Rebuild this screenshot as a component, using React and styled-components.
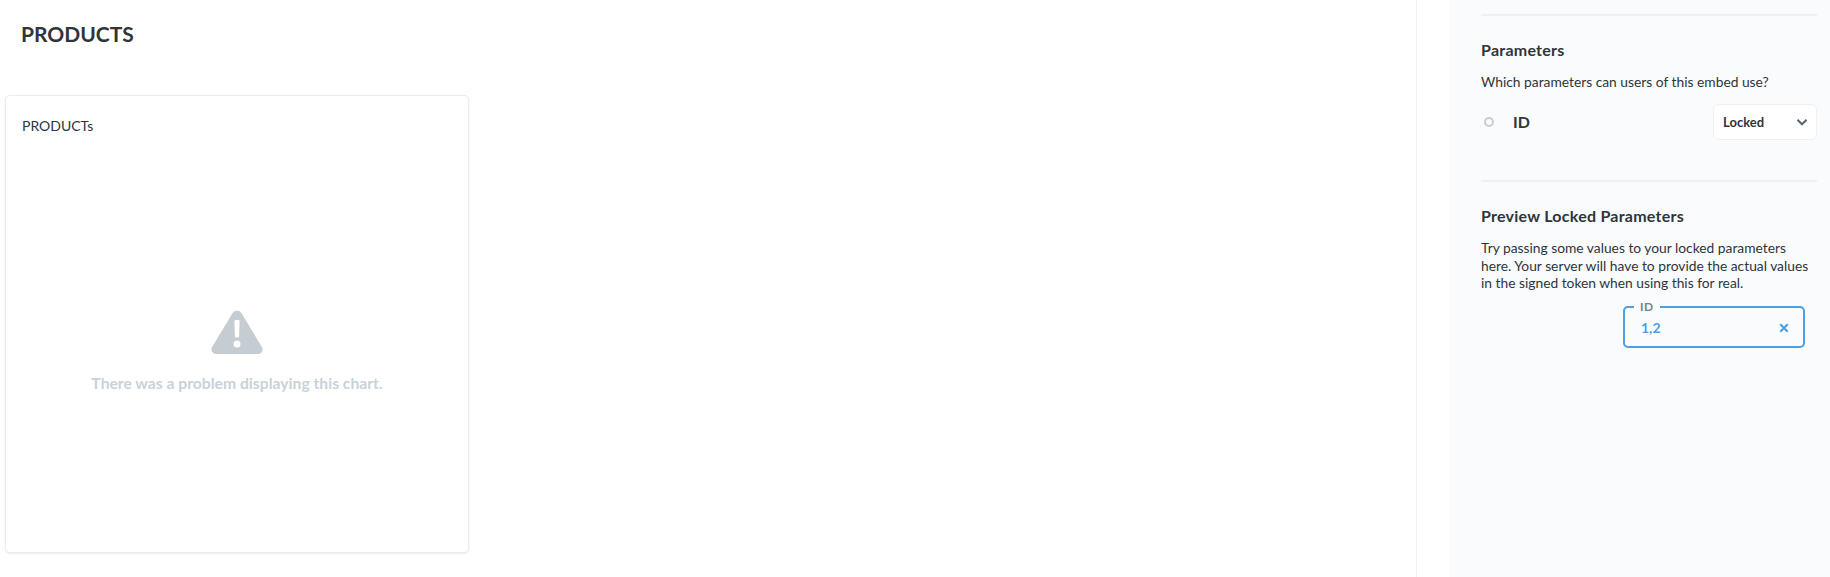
import React from 'react'
import styled, { createGlobalStyle } from 'styled-components'

const GlobalStyle = createGlobalStyle`
    html, body {
        margin: 0;
        padding: 0;
        background-color: #fff;
    }
    body {
        font-family: Lato, "Noto Sans", sans-serif;
        color: #2e353b;
    }
`

const Page = styled.div`
    display: flex;
    width: 1830px;
    height: 577px;
    overflow: hidden;
`

const Main = styled.main`
    width: 1410px;
    flex-shrink: 0;
    padding: 22px 0 0 6px;
    border-right: 1px solid #f0f0f0;
`

const Title = styled.h1`
    margin: 0 0 0 15px;
    font-size: 21px;
    line-height: 24px;
    font-weight: 700;
    color: #2e353b;
`

const Card = styled.section`
    margin-top: 50px;
    width: 462px;
    height: 456px;
    box-sizing: border-box;
    display: flex;
    flex-direction: column;
    padding: 21px 16px;
    background-color: #fff;
    border-radius: 4px;
    box-shadow: 0 0 0 1px #ececec, 0 1px 3px rgba(0, 0, 0, 0.16);
`

const CardTitle = styled.h2`
    margin: 0;
    font-size: 14px;
    line-height: 18px;
    font-weight: 400;
    color: #2e353b;
`

const ErrorBox = styled.div`
    flex: 1;
    display: flex;
    flex-direction: column;
    align-items: center;
    padding-top: 175px;
    color: #c6cdd2;
`

const ErrorText = styled.p`
    margin: 19px 0 0;
    font-size: 15.7px;
    line-height: 20px;
    font-weight: 700;
    color: #c9d2d9;
`

const Gutter = styled.div`
    width: 32px;
    flex-shrink: 0;
`

const Aside = styled.aside`
    flex: 1;
    padding: 14px 13px 0 32px;
    background-color: #f9fbfc;
`

const Section = styled.div`
    box-sizing: border-box;
    border-top: 2px solid #f0f0f2;
    padding-top: 24px;
    height: ${props => props.$height}px;
`

const Heading = styled.h3`
    margin: 0;
    font-size: 16px;
    line-height: 20px;
    font-weight: 700;
    letter-spacing: 0.25px;
    color: #2e353b;
`

const Help = styled.p`
    margin: 13px 0 0;
    font-size: 13.8px;
    line-height: 17.5px;
    color: #2e353b;
`

const ParamRow = styled.div`
    display: flex;
    align-items: center;
    margin-top: 13px;
`

const Dot = styled.span`
    width: 10px;
    height: 10px;
    box-sizing: border-box;
    margin-left: 3px;
    border: 2px solid #c6cdd2;
    border-radius: 50%;
`

const ParamName = styled.span`
    margin-left: 19px;
    font-size: 16px;
    font-weight: 700;
    flex: 1;
    color: #2e353b;
`

const Select = styled.div`
    width: 104px;
    height: 36px;
    box-sizing: border-box;
    display: flex;
    align-items: center;
    justify-content: space-between;
    padding: 0 8px 0 9px;
    background-color: #fff;
    border: 1px solid #f0f0f0;
    border-radius: 6px;
    font-size: 13px;
    font-weight: 700;
    color: #2e353b;
`

const Chevron = styled.svg`
    width: 12px;
    height: 12px;
    color: #5a6570;
`

const FilterWrap = styled.div`
    display: flex;
    justify-content: flex-end;
    padding-right: 12px;
    margin-top: 9px;
`

const Filter = styled.fieldset`
    width: 182px;
    height: 47px;
    box-sizing: border-box;
    margin: 0;
    padding: 0 14px 3px 16px;
    display: flex;
    align-items: center;
    justify-content: space-between;
    border: 2px solid #509ee3;
    border-radius: 5px;
    font-size: 14px;
    font-weight: 700;
    color: #509ee3;
`

const FilterLabel = styled.legend`
    margin-left: -7px;
    padding: 0 6px;
    font-size: 12px;
    line-height: 12px;
    font-weight: 700;
    letter-spacing: 0.5px;
    color: #74838f;
`

const ClearIcon = styled.svg`
    width: 10px;
    height: 10px;
`

const WarningIcon = () => (
    <svg width="52" height="44" viewBox="0 0 52 44">
        <path
            fill="currentColor"
            fillRule="evenodd"
            d="M21.6 3.1a5 5 0 0 1 8.8 0l20.5 34a4.6 4.6 0 0 1-4 6.9H5.1a4.6 4.6 0 0 1-4-6.9zM23.4 11.5l.5 14.8c0 .8.6 1.2 1.2 1.2h1.8c.6 0 1.2-.4 1.2-1.2l.5-14.8c0-.8-.6-1.4-1.4-1.4h-2.4c-.8 0-1.4.6-1.4 1.4zM26 30.6a3.5 3.5 0 1 0 0 7 3.5 3.5 0 0 0 0-7z"
        />
    </svg>
)

const App = () => {
    return (
        <Page>
            <GlobalStyle />
            <Main>
                <Title>PRODUCTS</Title>
                <Card>
                    <CardTitle>PRODUCTs</CardTitle>
                    <ErrorBox>
                        <WarningIcon />
                        <ErrorText>There was a problem displaying this chart.</ErrorText>
                    </ErrorBox>
                </Card>
            </Main>
            <Gutter />
            <Aside>
                <Section $height={166}>
                    <Heading>Parameters</Heading>
                    <Help>Which parameters can users of this embed use?</Help>
                    <ParamRow>
                        <Dot />
                        <ParamName>ID</ParamName>
                        <Select>
                            Locked
                            <Chevron viewBox="0 0 12 12">
                                <path d="M1.5 3.8 6 8.3l4.5-4.5" fill="none" stroke="currentColor" strokeWidth="2" />
                            </Chevron>
                        </Select>
                    </ParamRow>
                </Section>
                <Section $height={300}>
                    <Heading>Preview Locked Parameters</Heading>
                    <Help>
                        Try passing some values to your locked parameters here. Your server will have to provide the actual values in the signed token when using this for real.
                    </Help>
                    <FilterWrap>
                        <Filter>
                            <FilterLabel>ID</FilterLabel>
                            1,2
                            <ClearIcon viewBox="0 0 10 10">
                                <path d="M1.3 1.3l7.4 7.4M8.7 1.3 1.3 8.7" fill="none" stroke="currentColor" strokeWidth="2.2" />
                            </ClearIcon>
                        </Filter>
                    </FilterWrap>
                </Section>
            </Aside>
        </Page>
    )
}

export default App
